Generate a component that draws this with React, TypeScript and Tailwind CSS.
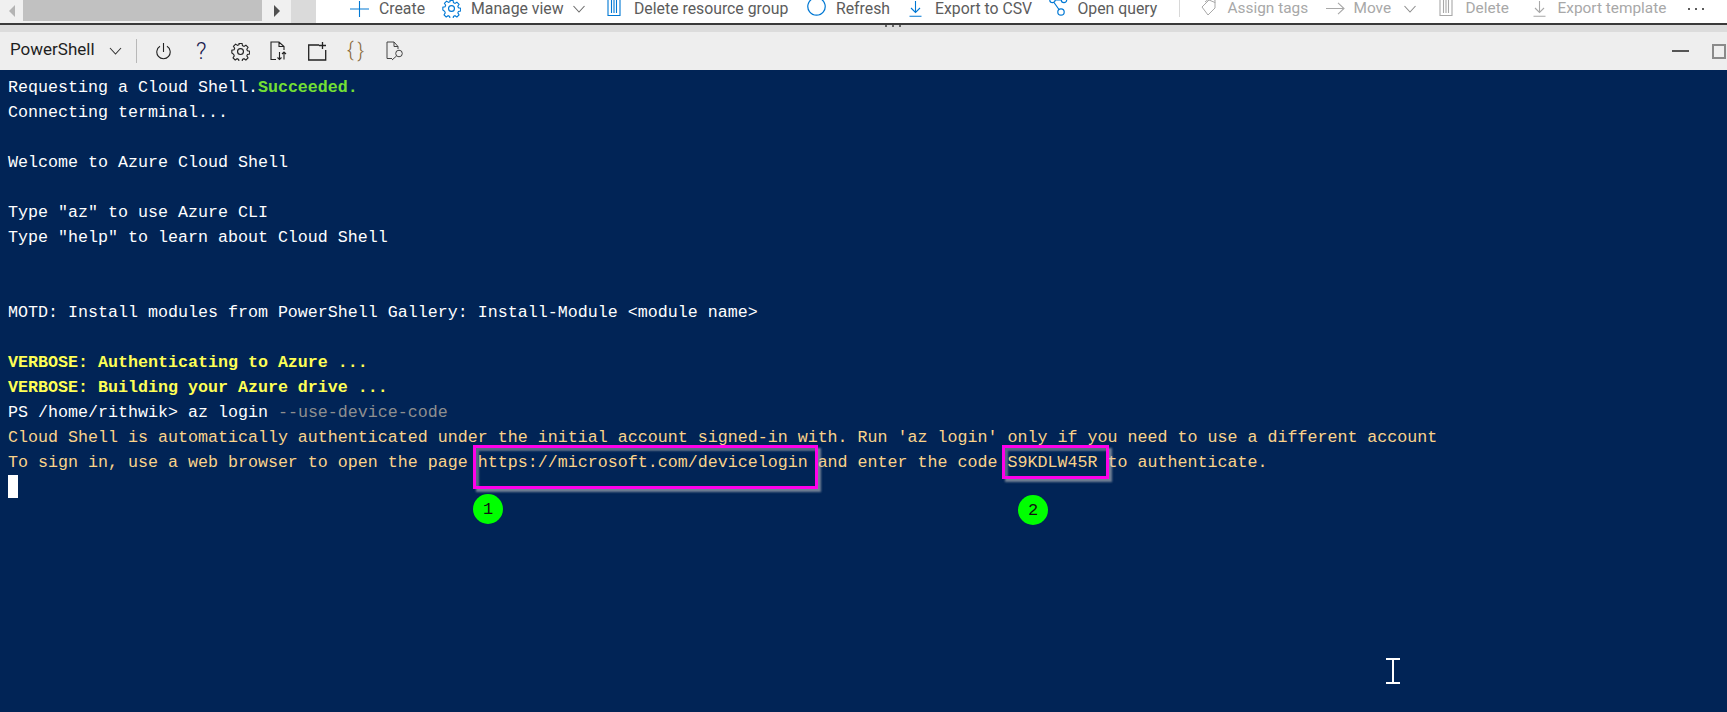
const blue = "#0078d4";

function Cmd({ icon, label, w, gap, muted = false }: { icon: React.ReactNode; label: string; w: string; gap: string; muted?: boolean }) {
  return (
    <div className={`flex shrink-0 items-center ${gap} ${w}`}>
      {icon}
      <span className={`whitespace-nowrap ${muted ? "text-[15.400px] text-[#a8a8a8]" : "text-[15.800px] text-[#5c5c5c]"}`}>{label}</span>
    </div>
  );
}

function Chevron({ color = "#6b6b6b", size = 14 }: { color?: string; size?: number }) {
  return (
    <svg width={size} height={8} viewBox="0 0 13 8" fill="none" stroke={color} strokeWidth="1.1" className="shrink-0"><path d="M1 1l5.500 6L12 1" /></svg>
  );
}

function Gear({ color, size = 19 }: { color: string; size?: number }) {
  return (
    <svg width={size} height={size} viewBox="0 0 18 18" fill="none" stroke={color} strokeWidth="1.1" className="shrink-0">
      <circle cx="9" cy="9" r="2.800" />
      <path d="M7.500 1h3l.4 2.200 1.500.7 1.900-1.200 2.100 2.100-1.200 1.900.6 1.500 2.200.4v2.800l-2.200.4-.6 1.500 1.200 1.900-2.100 2.100-1.900-1.200-1.500.7-.4 2.200h-3l-.4-2.200-1.500-.7-1.900 1.200-2.100-2.100 1.200-1.900-.6-1.500L.4 10.400V7.600l2.200-.4.6-1.500L2 3.800l2.100-2.100L6 2.900l1.500-.7z" transform="translate(0.4 0.4) scale(0.96)" />
    </svg>
  );
}

function Trash({ color }: { color: string }) {
  return (
    <svg width="14" height="20" viewBox="0 0 14 20" fill="none" stroke={color} strokeWidth="1.100" className="-mt-[3px] shrink-0">
      <path d="M1 0v18.500h12V0M4.500 2v14M7 2v14M9.500 2v14" />
    </svg>
  );
}

function Download({ color }: { color: string }) {
  return (
    <svg width="13" height="17" viewBox="0 0 13 17" fill="none" stroke={color} strokeWidth="1.100" className="shrink-0">
      <path d="M6.500 1v11M2 8l4.500 4.500L11 8M0.500 16.300h12" />
    </svg>
  );
}

function TopBar() {
  return (
    <div className="flex h-[25px] overflow-hidden border-b-2 border-[#3a3a3a] bg-white">
      <div className="flex h-[23px] w-[316px] shrink-0 bg-[#dadada]">
        <div className="flex w-[291px] bg-[#f0f0f0]">
          <div className="flex h-[21px] w-[23px] items-center justify-center">
            <div className="h-0 w-0 border-y-[6px] border-r-[6px] border-y-transparent border-r-[#b4b4b4]" />
          </div>
          <div className="h-[21px] w-[239px] bg-[#c1c1c1]" />
          <div className="flex h-[21px] w-[29px] items-center justify-center">
            <div className="h-0 w-0 border-y-[6px] border-l-[6px] border-y-transparent border-l-[#505050]" />
          </div>
        </div>
      </div>
      <div className="flex h-[17px] flex-1 items-center pl-[34px]">
        <Cmd w="w-[92px]" gap="gap-[10px]" label="Create" icon={
          <svg width="19" height="16" viewBox="0 0 19 16" stroke={blue} strokeWidth="1.100" className="shrink-0"><path d="M9.500 0v16M0 8h19" /></svg>} />
        <Cmd w="w-[130px]" gap="gap-[10px]" label="Manage view" icon={<Gear color={blue} />} />
        <Chevron />
        <div className="w-[21px] shrink-0" />
        <Cmd w="w-[200px]" gap="gap-[13px]" label="Delete resource group" icon={<Trash color={blue} />} />
        <Cmd w="w-[102px]" gap="gap-[10px]" label="Refresh" icon={
          <svg width="19" height="20" viewBox="0 0 19 20" fill="none" stroke={blue} strokeWidth="1.200" className="-mt-[5px] shrink-0"><path d="M6 2.500a8.700 8.700 0 1 0 7 0" /></svg>} />
        <Cmd w="w-[139.500px]" gap="gap-[13px]" label="Export to CSV" icon={<Download color={blue} />} />
        <Cmd w="w-[130px]" gap="gap-[10px]" label="Open query" icon={
          <svg width="19" height="20" viewBox="0 0 19 20" fill="none" stroke={blue} strokeWidth="1.200" className="-mt-[6px] shrink-0"><circle cx="3.500" cy="4" r="2.700" /><circle cx="15" cy="4" r="2.700" /><circle cx="12" cy="16" r="3.200" /><path d="M6 4h6.500M5 6.500l5 7" /></svg>} />
        <div className="mr-[21px] h-[17px] w-px shrink-0 bg-[#d8d8d8]" />
        <Cmd w="w-[125px]" gap="gap-[11px]" muted label="Assign tags" icon={
          <svg width="16" height="19" viewBox="0 0 16 19" fill="none" stroke="#a8a8a8" strokeWidth="1" className="-mt-[4px] shrink-0"><path d="M1 10l7-7 6 2.500v5.500l-7 7zM4 5l5-4 5 2v3" /></svg>} />
        <Cmd w="w-[77px]" gap="gap-[9px]" muted label="Move" icon={
          <svg width="19" height="13" viewBox="0 0 19 13" fill="none" stroke="#a8a8a8" strokeWidth="1.100" className="shrink-0"><path d="M0 6.500h18M12 .8l6 5.700-6 5.700" /></svg>} />
        <Chevron color="#8c8c8c" />
        <div className="w-[22px] shrink-0" />
        <Cmd w="w-[94px]" gap="gap-[13px]" muted label="Delete" icon={<Trash color="#a8a8a8" />} />
        <Cmd w="w-[155px]" gap="gap-[12px]" muted label="Export template" icon={<Download color="#a8a8a8" />} />
        <div className="flex gap-[5px]">
          <span className="h-[2px] w-[2px] bg-[#5c5c5c]" />
          <span className="h-[2px] w-[2px] bg-[#5c5c5c]" />
          <span className="h-[2px] w-[2px] bg-[#5c5c5c]" />
        </div>
      </div>
    </div>
  );
}

function ShellBar() {
  const ink = "#222222";
  return (
    <div className="flex h-[38px] items-center bg-[#eeeeee] pl-[10px]">
      <span className="w-[98px] pb-[2px] text-[17px] text-[#1f1f1f]">PowerShell</span>
      <Chevron color="#333333" size={15} />
      <div className="ml-[13px] h-[24px] w-px bg-[#b8b8b8]" />
      <svg width="15" height="18" viewBox="0 0 15 18" fill="none" stroke={ink} strokeWidth="1.100" className="ml-[19px] shrink-0"><path d="M7.500 1v9M4 4.300a6.700 6.700 0 1 0 7 0" /></svg>
      <span className="ml-[25px] w-[12px] text-[23px] font-light leading-none text-[#1b1b4f]">?</span>
      <div className="ml-[23px]"><Gear color={ink} size={19} /></div>
      <svg width="17" height="20" viewBox="0 0 17 20" fill="none" stroke={ink} strokeWidth="1.100" className="ml-[20px] shrink-0"><path d="M6 18.500H1V1h8l5 4.500V9M9 1v4.500h5M9.500 11v7.500M7.500 16.500l2 2 2-2M14 18.500V11M12 13l2-2 2 2" /></svg>
      <svg width="19" height="19" viewBox="0 0 19 19" fill="none" stroke={ink} strokeWidth="1.300" className="ml-[21px] shrink-0"><path d="M11 3H.7v15h17V8M14.500 0v7M11 3.500h7" /></svg>
      <span className="ml-[20px] w-[17px] pb-[2px] text-[20px] font-light leading-none tracking-[4px] text-[#8a6a3a]">{"{}"}</span>
      <svg width="18" height="20" viewBox="0 0 18 20" fill="none" stroke="#444444" strokeWidth="1" className="ml-[22px] shrink-0"><path d="M6 17.500H1V1h7l4 4.500V8M8 1v4.500h4" /><circle cx="13" cy="12.500" r="3.300" /><path d="M10.500 15L6 19" /></svg>
      <div className="ml-auto flex items-center gap-[23px] pr-[1px]">
        <div className="h-[2px] w-[17px] bg-[#555555]" />
        <div className="h-[15px] w-[14px] border-2 border-[#8a8a8a]" />
      </div>
    </div>
  );
}

const lineClass = "h-[25px] whitespace-pre";

function Badge({ n, cls }: { n: string; cls: string }) {
  return (
    <div className={`absolute ${cls} flex h-[30px] w-[30px] items-center justify-center rounded-full bg-[#00ff00] text-[17px] text-[#111111]`}>{n}</div>
  );
}

function Terminal() {
  return (
    <div className="relative flex-1 overflow-hidden bg-[#012456] pl-[8px] pt-[5px] font-['Liberation_Mono',monospace] text-[16.670px] leading-[25px] text-white">
      <div className={lineClass}>Requesting a Cloud Shell.<b className="text-[#74e034]">Succeeded.</b></div>
      <div className={lineClass}>Connecting terminal...</div>
      <div className={lineClass} />
      <div className={lineClass}>Welcome to Azure Cloud Shell</div>
      <div className={lineClass} />
      <div className={lineClass}>Type "az" to use Azure CLI</div>
      <div className={lineClass}>Type "help" to learn about Cloud Shell</div>
      <div className={lineClass} />
      <div className={lineClass} />
      <div className={lineClass}>{"MOTD: Install modules from PowerShell Gallery: Install-Module <module name>"}</div>
      <div className={lineClass} />
      <div className={`${lineClass} font-bold text-[#ffff55]`}>VERBOSE: Authenticating to Azure ...</div>
      <div className={`${lineClass} font-bold text-[#ffff55]`}>VERBOSE: Building your Azure drive ...</div>
      <div className={lineClass}>{"PS /home/rithwik> az login "}<span className="text-[#8f8f8f]">--use-device-code</span></div>
      <div className={`${lineClass} text-[#fbd38a]`}>Cloud Shell is automatically authenticated under the initial account signed-in with. Run 'az login' only if you need to use a different account</div>
      <div className={`${lineClass} text-[#fbd38a]`}>To sign in, use a web browser to open the page https://microsoft.com/devicelogin and enter the code S9KDLW45R to authenticate.</div>
      <div className="h-[25px]"><div className="h-[23px] w-[10px] bg-white" /></div>

      <div className="absolute left-[473px] top-[375px] h-[44px] w-[345px] border-[3px] border-[#ff00ea] shadow-[3px_3px_2px_rgba(190,190,190,0.6),inset_3px_3px_2px_rgba(190,190,190,0.45)]" />
      <div className="absolute left-[1002px] top-[375px] h-[34px] w-[107px] border-[3px] border-[#ff00ea] shadow-[3px_3px_2px_rgba(190,190,190,0.6),inset_3px_3px_2px_rgba(190,190,190,0.45)]" />
      <Badge n="1" cls="left-[473px] top-[424px]" />
      <Badge n="2" cls="left-[1018px] top-[425px]" />
      <svg width="14" height="26" viewBox="0 0 14 26" className="absolute left-[1386px] top-[588px]" fill="none" stroke="white" strokeWidth="2"><path d="M0 1h14M7 1v24M0 25h14" /></svg>
    </div>
  );
}

export default function App() {
  return (
    <div className="relative flex h-[712px] w-[1727px] flex-col overflow-hidden font-['Roboto','Noto_Sans',sans-serif]">
      <TopBar />
      <div className="relative h-[7px] bg-[#dcdcdc]">
        <div className="absolute left-[885px] top-0 flex gap-[5px]">
          <span className="h-[2px] w-[2px] bg-[#666666]" />
          <span className="h-[2px] w-[2px] bg-[#666666]" />
          <span className="h-[2px] w-[2px] bg-[#666666]" />
        </div>
      </div>
      <ShellBar />
      <Terminal />
    </div>
  );
}
